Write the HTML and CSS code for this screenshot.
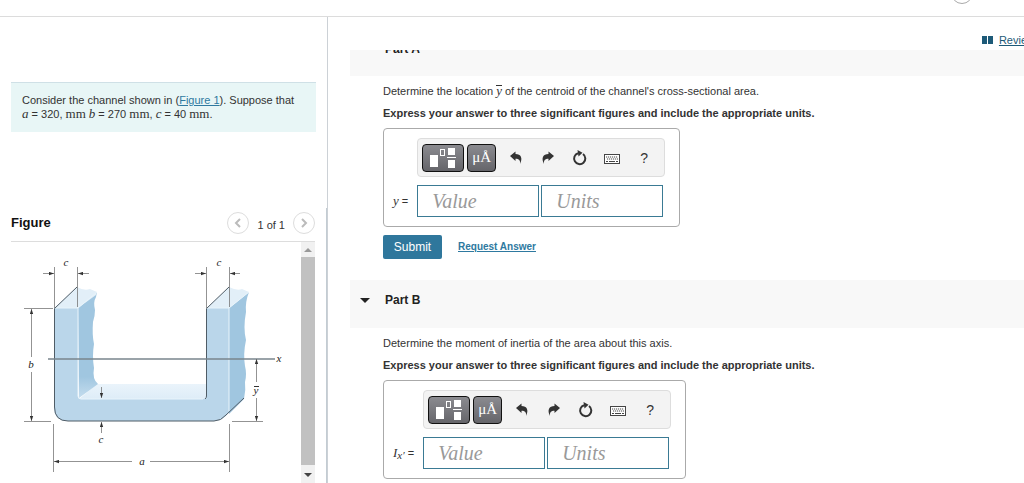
FILE: index.html
```html
<!DOCTYPE html>
<html lang="en">
<head>
    <meta charset="UTF-8">
    <meta name="viewport" content="width=device-width, initial-scale=1.0">
    <title>Channel Centroid and Moment of Inertia</title>
    <link rel="stylesheet" href="styles.css">
</head>
<body>
    <!-- icons shared by both answer toolbars -->
    <svg class="icon-defs" aria-hidden="true">
        <symbol id="icon-template" viewBox="0 0 28 24">
            <rect x="1" y="9" width="8" height="12" fill="#fff"/>
            <rect x="11.5" y="3.5" width="4" height="6" fill="none" stroke="#fff"/>
            <rect x="19" y="2" width="7" height="7" fill="#fff"/>
            <rect x="18" y="11" width="9" height="1" fill="#fff"/>
            <rect x="19" y="14" width="7" height="8" fill="#fff"/>
        </symbol>
        <symbol id="icon-undo" viewBox="0 0 14 14">
            <path d="M1 5L6.5 0.500v2.500c5.500 0 7.500 4 4.500 10 .5-3.800-1-5.200-4.500-5.200V10z" fill="#333"/>
        </symbol>
        <symbol id="icon-redo" viewBox="0 0 14 14">
            <path d="M13 5L7.500 0.500V3C2 3 0 7 3 13c-.5-3.800 1-5.200 4.500-5.200V10z" fill="#333"/>
        </symbol>
        <symbol id="icon-reset" viewBox="0 0 16 16">
            <path d="M11 4A5.600 5.600 0 1 1 6 3.200" fill="none" stroke="#333" stroke-width="2"/>
            <path d="M5.500 0L10.500 2.800 6.500 6.500z" fill="#333"/>
        </symbol>
        <symbol id="icon-keyboard" viewBox="0 0 16 11">
            <rect x="0.500" y="0.500" width="15" height="9" fill="#fff" stroke="#444"/>
            <path d="M2 3h12M3 5h11" stroke="#444" stroke-dasharray="1.200 0.800"/>
            <path d="M2 7.500h2M5 7.500h6M12 7.500h2" stroke="#444"/>
        </symbol>
    </svg>

    <header class="top-bar"><span class="round-tab"></span></header>

    <div class="main-layout">
        <aside class="side-panel">
            <div class="intro-box">
                <p>Consider the channel shown in (<a href="#figure">Figure 1</a>). Suppose that
                <br><i>a</i> = 320, <span class="math">mm</span> <i>b</i> = 270 <span class="math">mm</span>, <i>c</i> = 40 <span class="math">mm</span>.</p>
            </div>

            <section class="figure-panel" id="figure">
                <div class="figure-header">
                    <h2>Figure</h2>
                    <div class="pager">
                        <button class="pager-btn" aria-label="Previous figure"><svg viewBox="0 0 10 10"><path d="M7 1L3 5l4 4"/></svg></button>
                        <span>1 of 1</span>
                        <button class="pager-btn" aria-label="Next figure"><svg viewBox="0 0 10 10"><path d="M3 1l4 4-4 4"/></svg></button>
                    </div>
                </div>
                <div class="figure-body">
                    <svg class="drawing" viewBox="11 242 290 241" role="img" aria-label="Channel cross section with dimensions a, b and c">
                        <defs>
                            <marker id="arrow" viewBox="0 0 6 4" refX="6" refY="2" markerWidth="5" markerHeight="4" orient="auto-start-reverse" markerUnits="userSpaceOnUse">
                                <path d="M0 0l6 2-6 2z" fill="#333"/>
                            </marker>
                            <linearGradient id="floor" x1="0" y1="0" x2="0" y2="1">
                                <stop offset="0" stop-color="#eaf4fb"/>
                                <stop offset="1" stop-color="#ddecf7"/>
                            </linearGradient>
                            <linearGradient id="side" x1="0" y1="0" x2="0" y2="1">
                                <stop offset="0.800" stop-color="#a0c6e0"/>
                                <stop offset="1" stop-color="#c5ddee"/>
                            </linearGradient>
                        </defs>
                        <!-- inner floor and side faces -->
                        <path d="M79 399L97 384H207V400H79z" fill="url(#floor)"/>
                        <path d="M78 308L97 292L96 297Q93 302 95 310Q95 316 93 322Q92 335 94 344Q92 356 94 368Q92 379 98 384L79 398z" fill="url(#side)"/>
                        <path d="M229 308L249 292Q245 302 246 312Q243 328 246 340Q243 354 245 366Q247 374 245 382Q246 390 244 399L229 414z" fill="#a0c6e0"/>
                        <!-- top faces -->
                        <path d="M54 308L77 287Q84 291 90 289L97 292 96 295 78 308z" fill="#e2eff8"/>
                        <path d="M207 308L229 287Q237 291 242 289L249 292 229 308z" fill="#e2eff8"/>
                        <!-- front face -->
                        <path d="M54 308H78V396Q78 399 81 399H204Q207 399 207 396V308H229V412Q223 421 214 421H68Q54 421 54 407z" fill="#bad6ea"/>
                        <path d="M54 308H78V396Q78 399 81 399H203M207 308H229V411M78 308L97 292M229 308L249 292" fill="none" stroke="#e9f4fb"/>
                        <path d="M77 287L54.500 308.500V407Q54.500 421 68 421H214Q221 421 226 415L244 398M229 287L206.500 308.500V396Q206.500 398 205 399" fill="none" stroke="#4f5c66"/>
                        <!-- axis -->
                        <path d="M48 359H275" stroke="#78858d" stroke-width="1.500"/>
                        <!-- dimension lines -->
                        <g fill="none" stroke="#777" stroke-width="0.800">
                            <path d="M54.500 267V308M77.500 267V307M206.500 267V308M229.500 267V307"/>
                            <path d="M24 308.500H53M24 421.500H51M232 421.500H263M53.500 424V472M229.500 424V472"/>
                            <g marker-end="url(#arrow)">
                                <path d="M43 273.500H54"/>
                                <path d="M89 273.500H78"/>
                                <path d="M195 273.500H206"/>
                                <path d="M240 273.500H230"/>
                                <path d="M31.500 357V309"/>
                                <path d="M31.500 372V421"/>
                                <path d="M256.500 382V359"/>
                                <path d="M256.500 398V421"/>
                                <path d="M132 461.500H54"/>
                                <path d="M150 461.500H229"/>
                                <path d="M101.500 387V398"/>
                                <path d="M101.500 433V422"/>
                            </g>
                        </g>
                        <g class="labels">
                            <text x="66" y="266">c</text>
                            <text x="219" y="266">c</text>
                            <text x="31" y="368">b</text>
                            <text x="279" y="362">x</text>
                            <text x="256" y="394">y</text>
                            <text x="101" y="443">c</text>
                            <text x="142" y="465">a</text>
                        </g>
                        <path d="M254 386.500H259" stroke="#333"/>
                    </svg>
                    <div class="scroll-track">
                        <span class="scroll-up"></span>
                        <span class="scroll-thumb"></span>
                        <span class="scroll-down"></span>
                    </div>
                </div>
            </section>
        </aside>

        <main class="content">
            <div class="review-bar">
                <svg class="book" viewBox="0 0 12 8" aria-hidden="true"><path d="M0 0h5v8H0zM6 0h5v8H6z" fill="#1d5a78"/></svg>
                <a href="#review">Review</a>
            </div>

            <section>
                <div class="part-header scrolled"><h3>Part A</h3></div>
                <div class="part-body">
                    <p>Determine the location <i class="bar">y</i> of the centroid of the channel's cross-sectional area.</p>
                    <p class="instruction">Express your answer to three significant figures and include the appropriate units.</p>
                    <div class="answer-box">
                        <div class="toolbar">
                            <button class="dark-btn template-btn" aria-label="Templates"><svg><use href="#icon-template"/></svg></button>
                            <button class="dark-btn units-btn">μÅ</button>
                            <div class="tools">
                                <button class="tool-btn" aria-label="Undo"><svg width="14" height="14"><use href="#icon-undo"/></svg></button>
                                <button class="tool-btn" aria-label="Redo"><svg width="14" height="14"><use href="#icon-redo"/></svg></button>
                                <button class="tool-btn" aria-label="Reset"><svg width="16" height="16"><use href="#icon-reset"/></svg></button>
                                <button class="tool-btn" aria-label="Keyboard"><svg class="keys" width="16" height="11"><use href="#icon-keyboard"/></svg></button>
                                <button class="tool-btn">?</button>
                            </div>
                        </div>
                        <label for="value-a"><i>y</i> =</label>
                        <div class="fields">
                            <input id="value-a" type="text" placeholder="Value">
                            <input type="text" placeholder="Units" aria-label="Units for y">
                        </div>
                    </div>
                    <div class="actions">
                        <button class="submit-btn">Submit</button>
                        <a href="#answer" class="request-link">Request Answer</a>
                    </div>
                </div>
            </section>

            <section>
                <div class="part-header"><span class="caret"></span><h3>Part B</h3></div>
                <div class="part-body">
                    <p>Determine the moment of inertia of the area about this axis.</p>
                    <p class="instruction">Express your answer to three significant figures and include the appropriate units.</p>
                    <div class="answer-box">
                        <div class="toolbar">
                            <button class="dark-btn template-btn" aria-label="Templates"><svg><use href="#icon-template"/></svg></button>
                            <button class="dark-btn units-btn">μÅ</button>
                            <div class="tools">
                                <button class="tool-btn" aria-label="Undo"><svg width="14" height="14"><use href="#icon-undo"/></svg></button>
                                <button class="tool-btn" aria-label="Redo"><svg width="14" height="14"><use href="#icon-redo"/></svg></button>
                                <button class="tool-btn" aria-label="Reset"><svg width="16" height="16"><use href="#icon-reset"/></svg></button>
                                <button class="tool-btn" aria-label="Keyboard"><svg class="keys" width="16" height="11"><use href="#icon-keyboard"/></svg></button>
                                <button class="tool-btn">?</button>
                            </div>
                        </div>
                        <label for="value-b"><i>I<sub>x′</sub></i> =</label>
                        <div class="fields">
                            <input id="value-b" type="text" placeholder="Value">
                            <input type="text" placeholder="Units" aria-label="Units for I">
                        </div>
                    </div>
                </div>
            </section>
        </main>
    </div>
</body>
</html>
```
FILE: styles.css
```css
* {
    box-sizing: border-box;
}
body {
    margin: 0;
    height: 100vh;
    display: flex;
    flex-direction: column;
    overflow: hidden;
    background: #fff;
    font-family: "Liberation Sans", Arial, sans-serif;
    font-size: 11px;
    line-height: 14px;
    color: #333;
}
h2, h3, p {
    margin: 0;
}
a {
    color: #2e79a0;
}
i, .math {
    font-family: "Liberation Serif", "Times New Roman", serif;
    font-size: 13px;
    line-height: 1;
}
button {
    font-family: inherit;
    padding: 0;
    cursor: pointer;
}
.icon-defs {
    position: absolute;
    width: 0;
    height: 0;
}
.top-bar {
    flex: none;
    position: relative;
    height: 17px;
    border-bottom: 1px solid #dcdcdc;
    overflow: hidden;
}
.round-tab {
    position: absolute;
    right: 51px;
    bottom: 12px;
    width: 22px;
    height: 22px;
    border: 1px solid #aaa;
    border-radius: 50%;
}
.main-layout {
    flex: 1;
    min-height: 0;
    display: flex;
}

/* left side */
.side-panel {
    flex: 0 0 328px;
    display: flex;
    flex-direction: column;
    padding: 65px 0 0 11px;
    border-right: 1px solid #ccd1d6;
}
.intro-box {
    margin-right: 11px;
    padding: 10px 11px;
    background: #e8f6f6;
    border-top: 1px solid #cfe0e6;
    min-height: 50px;
}
.figure-panel {
    flex: 1;
    min-height: 0;
    margin-top: 76px;
    display: flex;
    flex-direction: column;
    border-right: 1px solid #c3ccd3;
    padding-right: 11px;
}
.figure-header {
    display: flex;
    justify-content: space-between;
    align-items: center;
    height: 34px;
    padding-bottom: 4px;
    border-bottom: 1px solid #ddd;
}
.figure-header h2 {
    font-size: 13px;
    color: #111;
}
.pager {
    display: flex;
    align-items: center;
    gap: 8px;
}
.pager span {
    padding-top: 4px;
}
.pager-btn {
    width: 22px;
    height: 22px;
    border: 1px solid #ddd;
    border-radius: 50%;
    background: #fff;
    display: flex;
    align-items: center;
    justify-content: center;
}
.pager-btn svg {
    width: 10px;
    height: 10px;
    fill: none;
    stroke: #bbb;
    stroke-width: 2;
}
.figure-body {
    flex: 1;
    min-height: 0;
    display: flex;
}
.drawing {
    flex: 1;
    min-width: 0;
}
.labels text {
    font: italic 11px "Liberation Serif", "Times New Roman", serif;
    text-anchor: middle;
    fill: #222;
}
.scroll-track {
    flex: 0 0 14px;
    display: flex;
    flex-direction: column;
    align-items: center;
    background: #f1f1f1;
}
.scroll-thumb {
    flex: 1;
    width: 14px;
    background: #c1c1c1;
}
.scroll-up, .scroll-down {
    margin: 6px 0 5px;
    border: 4px solid transparent;
}
.scroll-up {
    border-top-width: 0;
    border-bottom-color: #999;
}
.scroll-down {
    border-bottom-width: 0;
    border-top-color: #444;
    margin: 8px 0 6px;
}

/* right side */
.content {
    flex: 1;
    min-width: 0;
    padding-left: 22px;
    overflow: hidden;
}
.review-bar {
    height: 33px;
    padding-top: 16px;
    display: flex;
    justify-content: flex-end;
    gap: 5px;
    margin-right: -11px;
}
.review-bar a {
    color: #1d5a78;
}
.book {
    width: 12px;
    height: 8px;
    margin-top: 3px;
}
.part-header {
    display: flex;
    align-items: center;
    height: 48px;
    padding: 0 10px 8px;
    background: #f8f8f8;
}
/* scrolled part way under the review bar */
.part-header.scrolled {
    align-items: flex-end;
    height: 26px;
    padding: 0 35px 20px;
    overflow: hidden;
}
.part-header h3 {
    font-size: 12px;
    color: #222;
}
.caret {
    margin-right: 15px;
    border: 5px solid transparent;
    border-top-color: #222;
    border-bottom-width: 0;
}
.part-body {
    padding: 8px 0 0 33px;
    white-space: nowrap;
}
.instruction {
    margin: 8px 0;
    font-weight: bold;
}
.bar {
    display: inline-block;
    height: 11px;
    line-height: 9px;
    border-top: 1px solid #333;
}
.answer-box {
    display: inline-grid;
    grid-template-columns: auto auto;
    align-items: center;
    column-gap: 9px;
    row-gap: 8px;
    padding: 9px 14px 9px 9px;
    border: 1px solid #aaa;
    border-radius: 4px;
    vertical-align: top;
}
.toolbar {
    grid-column: 2;
    display: flex;
    align-items: center;
    height: 39px;
    padding: 0 4px;
    background: #f3f3f3;
    border: 1px solid #ddd;
    border-radius: 4px;
}
.dark-btn {
    height: 28px;
    margin-right: 3px;
    border: 1px solid #111;
    border-radius: 4px;
    background: linear-gradient(#8b8b90, #65656a);
    color: #fff;
}
.template-btn {
    width: 42px;
}
.template-btn svg {
    display: block;
    width: 28px;
    height: 24px;
    margin: 0 auto;
}
.units-btn {
    width: 29px;
    font: 15px "Liberation Serif", "Times New Roman", serif;
}
.tools {
    display: flex;
    margin-left: 1px;
}
.tool-btn {
    display: flex;
    align-items: center;
    justify-content: center;
    width: 32px;
    height: 28px;
    border: 0;
    background: none;
    font-size: 14px;
    color: #333;
}
.keys {
    margin-top: 4px;
}
.fields {
    display: flex;
    gap: 2px;
}
.fields input {
    width: 122px;
    height: 32px;
    padding: 0 14px;
    border: 1px solid #3a7a94;
    background: #fff;
    font: 20px "Liberation Serif", "Times New Roman", serif;
}
.fields input::placeholder {
    color: #999;
    font-style: italic;
}
.answer-box sub {
    font-size: 11px;
    line-height: 1;
    vertical-align: -2px;
}
.actions {
    display: flex;
    align-items: center;
    gap: 16px;
    margin: 8px 0 21px;
}
.submit-btn {
    width: 59px;
    height: 24px;
    border: 0;
    border-radius: 2px;
    background: #2f779c;
    color: #fff;
    font-size: 12px;
}
.request-link {
    font-size: 10px;
    font-weight: bold;
}
```
